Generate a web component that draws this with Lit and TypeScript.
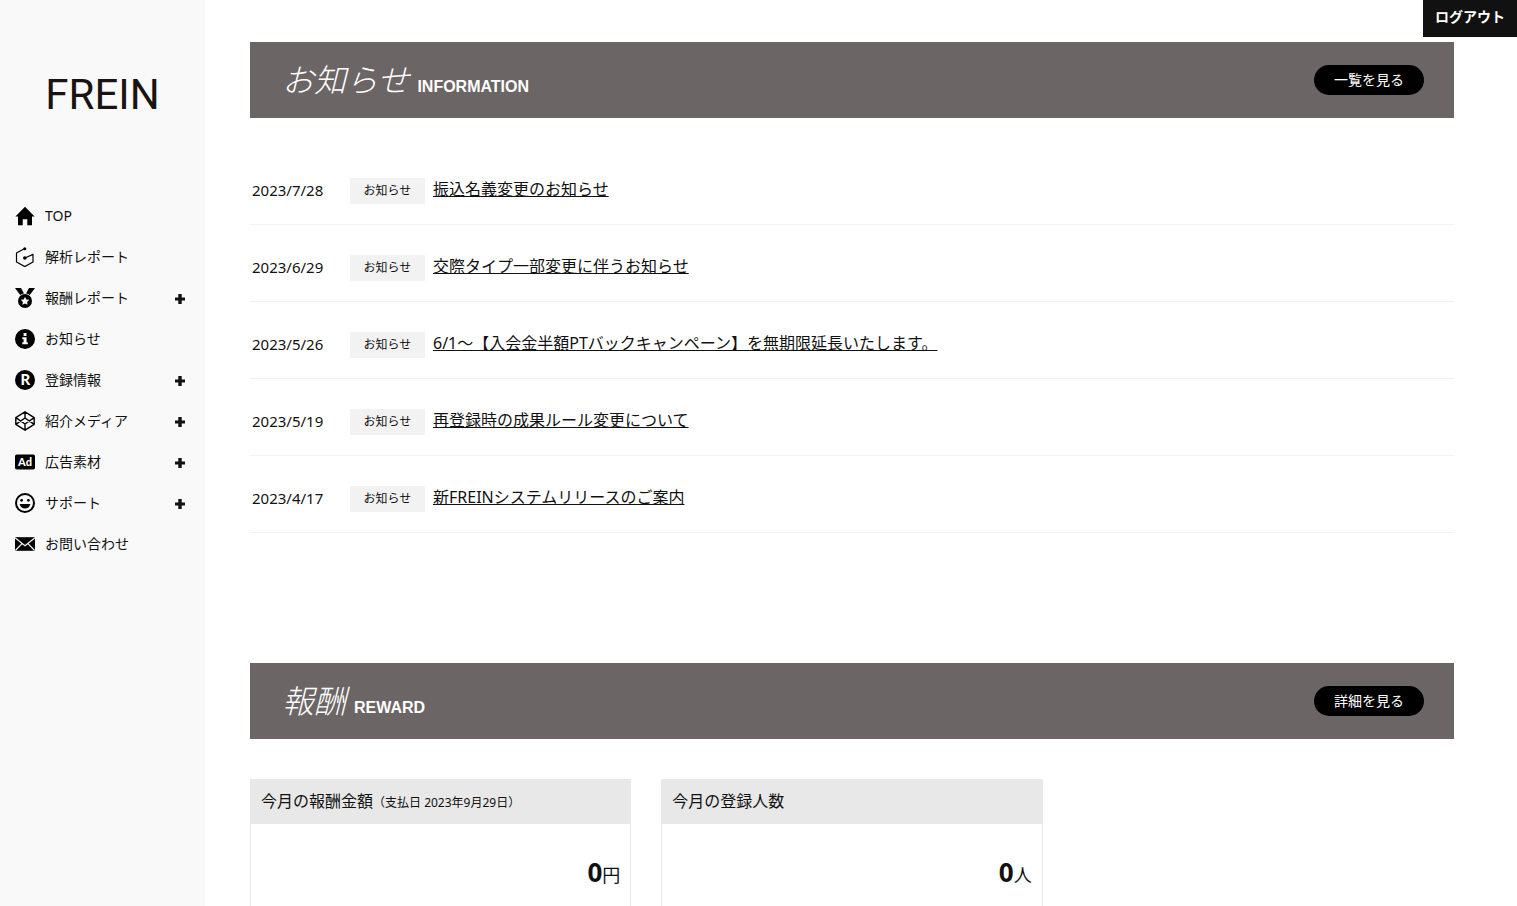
import { LitElement, html, svg, css, nothing } from "lit";
import { customElement } from "lit/decorators.js";

const star = (cx: number, cy: number, r: number) => {
  const pts: string[] = [];
  for (let i = 0; i < 10; i++) {
    const a = -Math.PI / 2 + (i * Math.PI) / 5;
    const q = i % 2 ? r * 0.5 : r;
    pts.push(`${(cx + q * Math.cos(a)).toFixed(2)},${(cy + q * Math.sin(a)).toFixed(2)}`);
  }
  return pts.join(" ");
};

const icons: Record<string, unknown> = {
  home: svg`<path d="M10 .8 L19.6 10.6 H17 V19.2 H12.3 V13.2 H7.7 V19.2 H3 V10.6 H.4 Z"/>`,
  report: svg`<g fill="none" stroke="#000" stroke-width="1.2" stroke-linejoin="round"><path d="M9.8 1.4 L1.5 6 V15 L9.8 19.6 L18 15 V7.4 L9.8 11"/></g><circle cx="9.8" cy="1.7" r="1.5"/><circle cx="9.8" cy="11" r="1.8"/>`,
  medal: svg`<path d="M0 0 H6 L9 5.4 Q6.5 5.8 5.2 7 Z M20 0 H14 L11 5.4 Q13.5 5.8 14.8 7 Z"/><circle cx="10" cy="13" r="7"/><polygon fill="#f9f9f9" points=${star(10, 13.2, 4.4)}></polygon>`,
  info: svg`<circle cx="10" cy="10" r="10"/><path fill="#f9f9f9" d="M8.6 4 H11.5 V6.9 H8.6 Z M7.3 8.3 H11.6 V13.3 H12.8 V15.2 H7.3 V13.3 H8.6 V10.2 H7.3 Z"/>`,
  registered: svg`<circle cx="10" cy="10" r="10"/><text class="r" x="10.3" y="15.3" text-anchor="middle">R</text>`,
  media: svg`<g fill="none" stroke="#000" stroke-width="1.4" stroke-linejoin="round"><path d="M10 .8 L19.2 6.7 V13.3 L10 19.2 L.8 13.3 V6.7 Z M10 .8 V7 M10 13 V19.2 M.8 6.7 L10 13 L19.2 6.7 M.8 13.3 L10 7 L19.2 13.3"/></g>`,
  ad: svg`<rect y="2.5" width="20" height="15" rx="1.8"/><text class="ad" x="10" y="14" text-anchor="middle">Ad</text>`,
  support: svg`<circle cx="10" cy="10" r="9" fill="none" stroke="#000" stroke-width="2"/><circle cx="6.6" cy="7.3" r="1.4"/><circle cx="13.4" cy="7.3" r="1.4"/><path d="M4.6 11 H15.4 Q14 15.6 10 15.6 Q6 15.6 4.6 11 Z"/>`,
  mail: svg`<rect y="3.2" width="20" height="13.6"/><path fill="none" stroke="#f9f9f9" stroke-width="1.2" d="M0 3.6 L10 11.8 L20 3.6 M.4 16.5 L7 9.6 M19.6 16.5 L13 9.6"/>`,
};

const menu = [
  { icon: "home", label: "TOP", sub: false },
  { icon: "report", label: "解析レポート", sub: false },
  { icon: "medal", label: "報酬レポート", sub: true },
  { icon: "info", label: "お知らせ", sub: false },
  { icon: "registered", label: "登録情報", sub: true },
  { icon: "media", label: "紹介メディア", sub: true },
  { icon: "ad", label: "広告素材", sub: true },
  { icon: "support", label: "サポート", sub: true },
  { icon: "mail", label: "お問い合わせ", sub: false },
];

const news = [
  ["2023/7/28", "振込名義変更のお知らせ"],
  ["2023/6/29", "交際タイプ一部変更に伴うお知らせ"],
  ["2023/5/26", "6/1～【入会金半額PTバックキャンペーン】を無期限延長いたします。"],
  ["2023/5/19", "再登録時の成果ルール変更について"],
  ["2023/4/17", "新FREINシステムリリースのご案内"],
];

const rewards = [
  { title: "今月の報酬金額", note: "（支払日 2023年9月29日）", value: "0", unit: "円" },
  { title: "今月の登録人数", note: "", value: "0", unit: "人" },
];

@customElement("side-menu")
export class SideMenu extends LitElement {
  static styles = css`
    :host {
      display: block;
      background: #f9f9f9;
    }
    .logo {
      display: block;
      padding: 70px 0 0;
      text-align: center;
      font: 400 42px/50px Roboto, sans-serif;
      color: #1a1311;
      text-decoration: none;
    }
    .list {
      list-style: none;
      margin: 0;
      padding: 75px 20px 0 15px;
    }
    .item {
      display: flex;
      align-items: center;
      justify-content: space-between;
      height: 41px;
    }
    .link {
      display: flex;
      align-items: center;
      gap: 10px;
      font-size: 14px;
      line-height: 20px;
      color: #111;
      text-decoration: none;
    }
    .icon {
      display: block;
      width: 20px;
      height: 20px;
    }
    .r {
      font: 900 15px Lato, sans-serif;
      fill: #f9f9f9;
    }
    .ad {
      font: 900 11px Lato, sans-serif;
      fill: #f9f9f9;
    }
    .toggle {
      display: block;
      padding: 3px 0 0;
      border: 0;
      background: none;
    }
    .plus {
      display: block;
      width: 10px;
      height: 10px;
    }
  `;

  render() {
    return html`
      <a class="logo" href="#">FREIN</a>
      <nav>
        <ul class="list">
          ${menu.map(
            (m) => html`<li class="item">
              <a class="link" href="#"
                ><svg class="icon" viewBox="0 0 20 20" aria-hidden="true">${icons[m.icon]}</svg
                ><span>${m.label}</span></a
              >
              ${m.sub
                ? html`<button class="toggle" type="button" aria-label=${m.label}>
                    <svg class="plus" viewBox="0 0 10 10"><path fill="#111" d="M3.3 0 H6.7 V3.5 H10 V6.5 H6.7 V10 H3.3 V6.5 H0 V3.5 H3.3 Z" /></svg>
                  </button>`
                : nothing}
            </li>`
          )}
        </ul>
      </nav>
    `;
  }
}

@customElement("section-banner")
export class SectionBanner extends LitElement {
  static properties = { ja: {}, en: {}, action: {} };
  declare ja: string;
  declare en: string;
  declare action: string;

  static styles = css`
    :host {
      display: flex;
      align-items: center;
      justify-content: space-between;
      height: 76px;
      padding: 0 30px 0 32px;
      background: #6b6665;
      color: #fff;
    }
    .title {
      display: flex;
      align-items: baseline;
      gap: 8px;
      margin: 0;
      font-size: 32px;
      line-height: 40px;
      font-weight: 300;
    }
    .ja {
      font-style: italic;
    }
    .en {
      font: 700 16px/20px "Liberation Sans", Arial, sans-serif;
    }
    .more {
      width: 110px;
      border-radius: 15px;
      background: #000;
      color: #fff;
      font-size: 14px;
      line-height: 30px;
      text-align: center;
      text-decoration: none;
    }
  `;

  render() {
    return html`
      <h2 class="title"><span class="ja">${this.ja}</span><span class="en">${this.en}</span></h2>
      <a class="more" href="#">${this.action}</a>
    `;
  }
}

@customElement("app-root")
export class AppRoot extends LitElement {
  static styles = css`
    :host {
      display: grid;
      grid-template-columns: 205px 1fr;
      height: 100vh;
      position: relative;
      background: #fff;
      color: #111;
      font-family: "Noto Sans", "Noto Sans CJK JP", sans-serif;
      font-weight: 400;
    }
    .logout {
      position: absolute;
      top: 0;
      right: 0;
      padding: 0 12px 3px;
      border: 0;
      background: #111;
      color: #fff;
      font: inherit;
      font-size: 14px;
      line-height: 34px;
      font-weight: 700;
    }
    .main {
      min-width: 0;
      padding: 42px 63px 0 45px;
      overflow-y: auto;
      scrollbar-width: none;
    }
    .news {
      list-style: none;
      margin: 30px 0 130px;
      padding: 0;
    }
    .row {
      display: flex;
      align-items: center;
      padding: 30px 0 20px 2px;
      border-bottom: 1px solid #f2f2f2;
    }
    .date {
      width: 98px;
      padding-bottom: 2px;
      font-size: 15px;
      line-height: 24px;
    }
    .tag {
      width: 75px;
      margin-right: 8px;
      background: #f2f2f2;
      font-size: 12px;
      line-height: 26px;
      text-align: center;
    }
    .subject {
      font-size: 16px;
      line-height: 22px;
      padding-bottom: 4px;
      color: #111;
      text-decoration: underline;
    }
    .cards {
      display: grid;
      grid-template-columns: repeat(3, 1fr);
      gap: 30px;
      padding: 40px 0 60px;
    }
    .card {
      border: 1px solid #e8e8e8;
      border-top: 0;
    }
    .head {
      margin: 0;
      padding: 0 10px;
      background: #e8e8e8;
      font-size: 16px;
      line-height: 45px;
      height: 45px;
      font-weight: 400;
    }
    .note {
      font-size: 12px;
    }
    .value {
      margin: 0;
      padding: 28px 10px 30px;
      text-align: right;
      font-size: 18px;
      line-height: 40px;
    }
    .num {
      font-size: 26px;
      font-weight: 700;
    }
  `;

  render() {
    return html`
      <side-menu></side-menu>
      <main class="main">
        <section>
          <section-banner ja="お知らせ" en="INFORMATION" action="一覧を見る"></section-banner>
          <ul class="news">
            ${news.map(
              ([date, subject]) => html`<li class="row">
                <time class="date">${date}</time><span class="tag">お知らせ</span><a class="subject" href="#">${subject}</a>
              </li>`
            )}
          </ul>
        </section>
        <section>
          <section-banner ja="報酬" en="REWARD" action="詳細を見る"></section-banner>
          <div class="cards">
            ${rewards.map(
              (r) => html`<article class="card">
                <h3 class="head">${r.title}${r.note ? html`<span class="note">${r.note}</span>` : nothing}</h3>
                <p class="value"><span class="num">${r.value}</span>${r.unit}</p>
              </article>`
            )}
          </div>
        </section>
      </main>
      <button class="logout" type="button">ログアウト</button>
    `;
  }
}
